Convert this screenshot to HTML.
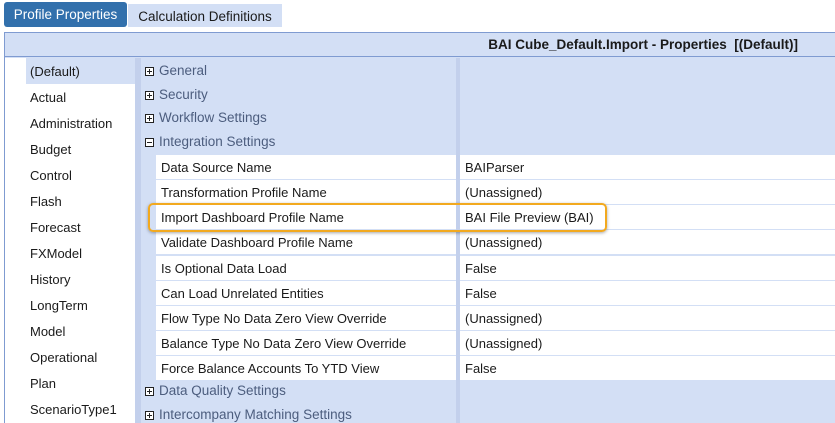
<!DOCTYPE html>
<html style="overflow:hidden;height:423px"><head><style>
*{margin:0;padding:0;box-sizing:border-box}
body{width:835px;height:423px;overflow:hidden;background:#fff;font-family:"Liberation Sans",sans-serif;font-size:13px;color:#1a1a1a;position:relative}
.a{position:absolute}
.tab1{left:4px;top:2px;width:123px;height:25px;background:#3270ac;color:#fff;border-radius:3px;font-size:13.5px;line-height:25px;text-align:center}
.tab2{left:128px;top:4px;width:154px;height:23px;background:#d3dff5;font-size:13.5px;line-height:25px;text-align:center}
.panel{left:4px;top:32px;width:840px;height:391px;border:1px solid #7f9bd1;border-bottom:none;background:#d3dff5}
.hdr{left:5px;top:33px;width:830px;height:24px;border-bottom:1px solid #7f9bd1;background:#d3dff5;font-weight:bold;font-size:13.5px;line-height:24px;text-align:right;padding-right:37px}
.list{left:5px;top:58px;width:130px;height:365px;background:#fff}
.li{position:absolute;left:30px;font-size:13px}
.sel{left:26px;top:58px;width:109px;height:26px;background:#d3dff5}
.div{left:135px;top:58px;width:6px;height:365px;background:#c3d0ec}
.vdiv{left:456px;top:58px;width:4px;height:365px;background:#c3d0ec}
.cat{position:absolute;left:159px;color:#4c5d7e;font-size:13.5px}
.box{position:absolute;left:145px;width:9px;height:9px;border:1px solid #222;background:#fff}
.box:before{content:"";position:absolute;left:1px;top:3px;width:5px;height:1px;background:#222}
.box.p:after{content:"";position:absolute;left:3px;top:1px;width:1px;height:5px;background:#222}
.row{position:absolute;left:156px;width:679px;height:24px;background:#fff}
.row span{position:absolute;left:5px;top:5px}
.row b{font-weight:normal;position:absolute;left:309px;top:5px}
.hl{left:148px;top:203px;width:459px;height:29px;border:2px solid #f2a91f;border-radius:5px;box-shadow:0 1px 3px rgba(0,0,0,.35)}
</style></head><body>
<div class="a tab1">Profile Properties</div>
<div class="a tab2">Calculation Definitions</div>
<div class="a panel"></div>
<div class="a hdr">BAI Cube_Default.Import - Properties&nbsp; [(Default)]</div>
<div class="a list"></div>
<div class="a sel"></div>
<div class="li" style="top:64px">(Default)</div>
<div class="li" style="top:90px">Actual</div>
<div class="li" style="top:116px">Administration</div>
<div class="li" style="top:142px">Budget</div>
<div class="li" style="top:168px">Control</div>
<div class="li" style="top:194px">Flash</div>
<div class="li" style="top:220px">Forecast</div>
<div class="li" style="top:246px">FXModel</div>
<div class="li" style="top:272px">History</div>
<div class="li" style="top:298px">LongTerm</div>
<div class="li" style="top:324px">Model</div>
<div class="li" style="top:350px">Operational</div>
<div class="li" style="top:376px">Plan</div>
<div class="li" style="top:402px">ScenarioType1</div>
<div class="a div"></div>

<div class="box p" style="top:67px"></div><div class="cat" style="top:63px">General</div>
<div class="box p" style="top:91px"></div><div class="cat" style="top:87px">Security</div>
<div class="box p" style="top:114px"></div><div class="cat" style="top:110px">Workflow Settings</div>
<div class="box" style="top:138px"></div><div class="cat" style="top:134px">Integration Settings</div>

<div class="row" style="top:155px"><span>Data Source Name</span><b>BAIParser</b></div>
<div class="row" style="top:180px"><span>Transformation Profile Name</span><b>(Unassigned)</b></div>
<div class="row" style="top:205px"><span>Import Dashboard Profile Name</span><b>BAI File Preview (BAI)</b></div>
<div class="row" style="top:230px"><span>Validate Dashboard Profile Name</span><b>(Unassigned)</b></div>
<div class="row" style="top:256px"><span>Is Optional Data Load</span><b>False</b></div>
<div class="row" style="top:281px"><span>Can Load Unrelated Entities</span><b>False</b></div>
<div class="row" style="top:306px"><span>Flow Type No Data Zero View Override</span><b>(Unassigned)</b></div>
<div class="row" style="top:331px"><span>Balance Type No Data Zero View Override</span><b>(Unassigned)</b></div>
<div class="row" style="top:356px"><span>Force Balance Accounts To YTD View</span><b>False</b></div>

<div class="box p" style="top:387px"></div><div class="cat" style="top:383px">Data Quality Settings</div>
<div class="box p" style="top:411px"></div><div class="cat" style="top:407px">Intercompany Matching Settings</div>
<div class="a vdiv"></div>
<div class="a hl"></div>
</body></html>
